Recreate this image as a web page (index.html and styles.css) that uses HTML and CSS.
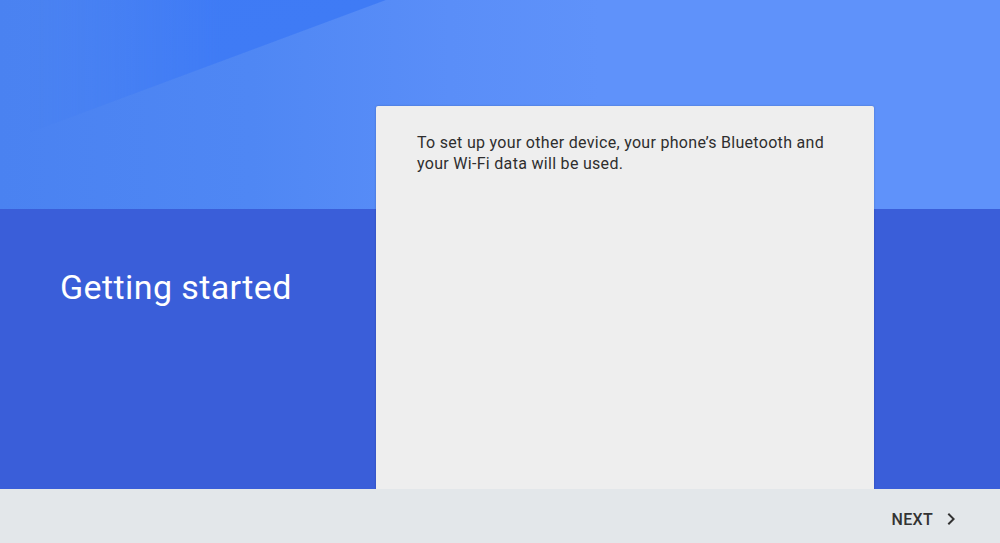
FILE: index.html
```html
<!DOCTYPE html>
<html lang="en">
<head>
<meta charset="utf-8">
<title>Getting started</title>
<link rel="stylesheet" href="styles.css">
</head>
<body>
<div class="screen">
  <main class="stage">
    <div class="decor" aria-hidden="true"></div>
    <h1 class="title">Getting started</h1>
    <section class="card">
      <p class="card-text">To set up your other device, your phone’s Bluetooth and your Wi-Fi data will be used.</p>
    </section>
  </main>
  <footer class="footer">
    <button class="next" type="button">NEXT
      <svg class="chev" width="24" height="24" viewBox="0 0 24 24" aria-hidden="true"><path d="M8.6 16.6 13.2 12 8.6 7.4 10 6l6 6-6 6z" fill="#333"/></svg>
    </button>
  </footer>
</div>
</body>
</html>
```
FILE: styles.css
```css
* { box-sizing: border-box; }
html, body { margin: 0; padding: 0; }
body {
  width: 1000px;
  height: 543px;
  overflow: hidden;
  font-family: Roboto, "Liberation Sans", sans-serif;
}
.screen {
  display: flex;
  flex-direction: column;
  height: 543px;
}
.stage {
  flex: 0 0 489px;
  display: grid;
  grid-template-columns: 376px 498px 1fr;
  grid-template-rows: 106px 103px 1fr;
  background:
    linear-gradient(to bottom, transparent 209px, #3a5ed9 209px),
    linear-gradient(90deg, #4a82f1 0, #4f87f4 25%, #5a8ef8 45%, #5f92fa 60%);
}
.decor {
  grid-column: 1 / -1;
  grid-row: 1 / 3;
  background: linear-gradient(159.6deg, #3e7af5 0, #3f7bf5 134px, rgba(63,123,245,0) 135px);
  -webkit-mask-image: linear-gradient(90deg, rgba(0,0,0,0) 30px, #000 220px);
  mask-image: linear-gradient(90deg, rgba(0,0,0,0) 30px, #000 220px);
}
.title {
  grid-column: 1;
  grid-row: 3;
  margin: 0;
  padding: 58px 0 0 60px;
  font-weight: 400;
  font-size: 34px;
  line-height: 40px;
  color: #fff;
  letter-spacing: 0.4px;
}
.card {
  grid-column: 2;
  grid-row: 2 / 4;
  background: #eeeeee;
  border-radius: 2px 2px 0 0;
  box-shadow: 0 0 2px rgba(0,0,0,0.25);
  padding: 26px 36px 0 41px;
}
.card-text {
  margin: 0;
  font-size: 16px;
  line-height: 21px;
  letter-spacing: 0.3px;
  color: #2e2e2e;
}
.footer {
  flex: 1;
  background: #e3e7ea;
  display: flex;
  justify-content: flex-end;
  align-items: center;
  padding: 6px 37px 0 0;
}
.next {
  display: flex;
  align-items: center;
  gap: 6px;
  border: 0;
  background: transparent;
  padding: 0;
  font-family: Roboto, "Liberation Sans", sans-serif;
  font-weight: 500;
  font-size: 16px;
  color: #333;
  letter-spacing: 0.3px;
}
.chev { display: block; }
```
